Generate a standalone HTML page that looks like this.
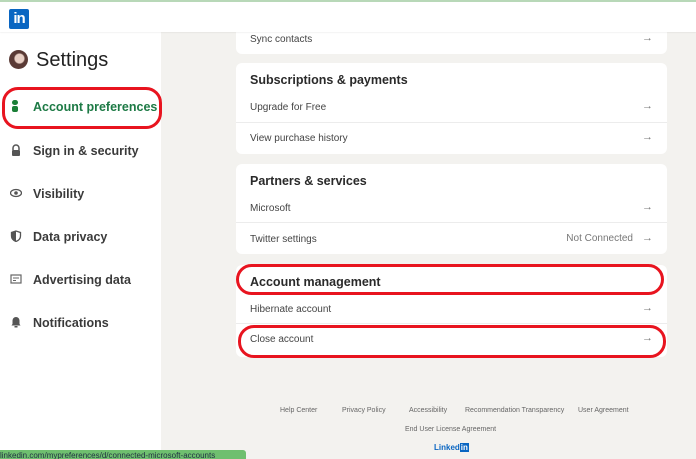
<!DOCTYPE html>
<html><head><style>
*{margin:0;padding:0;box-sizing:border-box}
body{width:696px;height:459px;overflow:hidden;background:#f3f2ef;font-family:"Liberation Sans",sans-serif;position:relative;color:#333}
.top{position:absolute;left:0;top:0;width:696px;height:32px;background:#fff;border-top:2px solid #b8d8b8;z-index:2;box-shadow:0 1px 1px rgba(0,0,0,.05)}
.logo{position:absolute;left:9px;top:7px;width:20px;height:20px;background:#0a66c2;border-radius:2px;color:#fff;font-weight:bold;font-size:15px;line-height:20px;text-align:center;letter-spacing:-1px}
.side{position:absolute;left:0;top:32px;width:161px;height:427px;background:#fff}
.set{position:absolute;left:36px;font-size:20px;color:#222}
.av{position:absolute;left:9px;width:19px;height:19px;border-radius:50%;background:radial-gradient(circle at 55% 45%,#e8cfc4 0 30%,#5a3a35 38%)}
.it{position:absolute;left:33px;font-size:12.5px;font-weight:bold;color:#3a3a3a;white-space:nowrap}
.ic{position:absolute;left:10px;width:12px;height:12px}
.card{position:absolute;left:236px;width:431px;background:#fff;border-radius:6px}
.h{position:absolute;left:14px;font-size:12.5px;font-weight:bold;color:#2a2a2a}
.r{position:absolute;left:14px;font-size:10px;color:#444}
.ar{position:absolute;right:14px;font-size:11px;color:#777}
.dv{position:absolute;left:0;right:0;height:1px;background:#ececec}
.f{position:absolute;font-size:7px;color:#666}
.red{position:absolute;border:3px solid #e8141f;border-radius:16px}
</style></head><body>
<div class="top"><div class="logo">in</div></div>
<div class="side">
<div class="av" style="top:18px"></div>
<div class="set" style="top:17px">Settings</div>
<div class="ic" style="top:68px;left:12px"><div style="width:6px;height:5px;background:#1a7f37;border-radius:3px"></div><div style="width:6px;height:6px;background:#1a7f37;border-radius:2px;margin-top:1px"></div></div>
<div class="it" style="top:68px;color:#1d7a45">Account preferences</div>
<svg class="ic" style="top:112px" viewBox="0 0 12 12"><path d="M3 6V4a3 3 0 016 0v2" fill="none" stroke="#555" stroke-width="1.5"/><rect x="2" y="6" width="8" height="6" rx="1" fill="#555"/></svg>
<div class="it" style="top:112px">Sign in &amp; security</div>
<svg class="ic" style="top:155px" viewBox="0 0 12 12"><ellipse cx="6" cy="6" rx="5.5" ry="3.5" fill="none" stroke="#555" stroke-width="1.3"/><circle cx="6" cy="6" r="1.8" fill="#555"/></svg>
<div class="it" style="top:155px">Visibility</div>
<svg class="ic" style="top:198px" viewBox="0 0 12 12"><path d="M6 1L1.5 2.5V6c0 3 2 4.5 4.5 5.5 2.5-1 4.5-2.5 4.5-5.5V2.5z" fill="none" stroke="#555" stroke-width="1.3"/><path d="M6 1v10.5c-2.5-1-4.5-2.5-4.5-5.5V2.5z" fill="#555"/></svg>
<div class="it" style="top:198px">Data privacy</div>
<svg class="ic" style="top:241px" viewBox="0 0 12 12"><rect x="1" y="2" width="10" height="8" fill="none" stroke="#666" stroke-width="1.2"/><path d="M3 5h6M3 7.5h3" stroke="#666"/></svg>
<div class="it" style="top:241px">Advertising data</div>
<svg class="ic" style="top:284px" viewBox="0 0 12 12"><path d="M6 1a3.5 3.5 0 00-3.5 3.5V8L1.5 9.5h9L9.5 8V4.5A3.5 3.5 0 006 1z" fill="#555"/><rect x="4.5" y="10" width="3" height="1.5" fill="#555"/></svg>
<div class="it" style="top:284px">Notifications</div>
</div>
<div class="red" style="left:2px;top:87px;width:160px;height:42px"></div>

<div class="card" style="top:20px;height:34px"><div class="r" style="top:14px">Sync contacts</div><div class="ar" style="top:12px">→</div></div>
<div class="card" style="top:63px;height:91px">
<div class="h" style="top:10px">Subscriptions &amp; payments</div>
<div class="r" style="top:39px">Upgrade for Free</div><div class="ar" style="top:37px">→</div>
<div class="dv" style="top:59px"></div>
<div class="r" style="top:70px">View purchase history</div><div class="ar" style="top:68px">→</div>
</div>
<div class="card" style="top:164px;height:90px">
<div class="h" style="top:10px">Partners &amp; services</div>
<div class="r" style="top:39px">Microsoft</div><div class="ar" style="top:37px">→</div>
<div class="dv" style="top:58px"></div>
<div class="r" style="top:70px">Twitter settings</div><div class="ar" style="top:68px"><span style="font-size:10px;margin-right:9px">Not Connected</span>→</div>
</div>
<div class="card" style="top:265px;height:92px">
<div class="h" style="top:10px">Account management</div>
<div class="r" style="top:39px">Hibernate account</div><div class="ar" style="top:37px">→</div>
<div class="dv" style="top:58px"></div>
<div class="r" style="top:69px">Close account</div><div class="ar" style="top:67px">→</div>
</div>
<div class="red" style="left:236px;top:264px;width:428px;height:31px"></div>
<div class="red" style="left:238px;top:325px;width:428px;height:33px"></div>

<div class="f" style="left:280px;top:407px">Help Center</div>
<div class="f" style="left:342px;top:407px">Privacy Policy</div>
<div class="f" style="left:409px;top:407px">Accessibility</div>
<div class="f" style="left:465px;top:407px">Recommendation Transparency</div>
<div class="f" style="left:578px;top:407px">User Agreement</div>
<div class="f" style="left:405px;top:426px">End User License Agreement</div>
<div style="position:absolute;left:434px;top:443px;font-size:8px;font-weight:bold;color:#0a66c2">Linked<span style="background:#0a66c2;color:#fff;padding:0 1px">in</span></div>
<div style="position:absolute;left:0;top:450px;width:246px;height:9px;background:#6fbf6f;border-radius:0 3px 0 0;font-size:8px;color:#234;line-height:11px;overflow:hidden;white-space:nowrap">linkedin.com/mypreferences/d/connected-microsoft-accounts</div>
</body></html>
